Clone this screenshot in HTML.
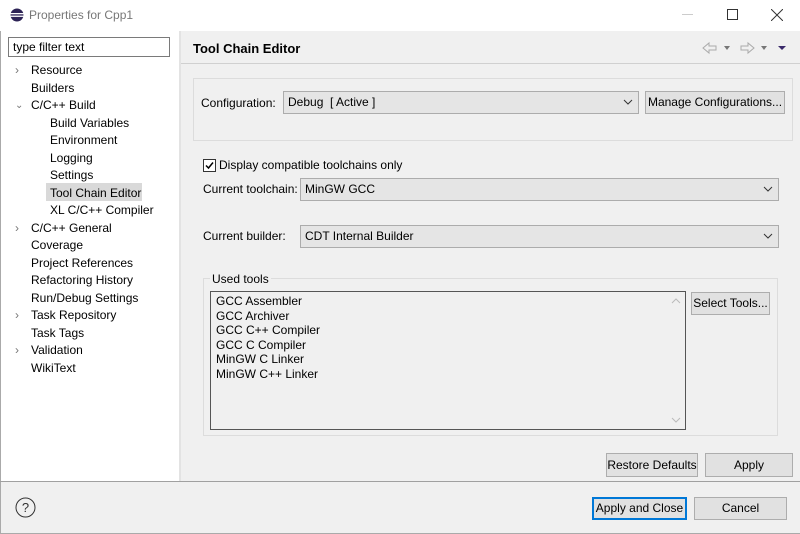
<!DOCTYPE html>
<html><head><style>
*{margin:0;padding:0;box-sizing:border-box}
body{width:800px;height:534px;position:relative;background:#f0f0f0;font-family:"Liberation Sans",sans-serif;font-size:12px;color:#000;overflow:hidden}
.a{position:absolute;white-space:nowrap}
.btn{position:absolute;background:#e1e1e1;border:1px solid #adadad;text-align:center;line-height:20px}
.combo{position:absolute;background:#e5e5e5;border:1px solid #acacac;padding-left:4px;line-height:20px}
.combo svg{position:absolute;right:5px;top:7px}
.grp{position:absolute;border:1px solid #dcdcdc}
.t{position:absolute;left:31px}
.t2{position:absolute;left:50px}
.arr{position:absolute;left:15px;color:#777}
</style></head><body>
<!-- title bar -->
<div class="a" style="left:0;top:0;width:800px;height:31px;background:#fff"></div>
<svg class="a" style="left:10px;top:8px" width="14" height="14" viewBox="0 0 14 14"><circle cx="7" cy="7" r="6.5" fill="#2c2255"/><rect x="0" y="5" width="14" height="1.3" fill="#fff"/><rect x="0" y="7.6" width="14" height="1.3" fill="#fff"/><circle cx="7" cy="7" r="6.5" fill="none" stroke="#f7941e" stroke-width="0" /></svg>
<div class="a" style="left:29px;top:8px;color:#777;font-size:12px">Properties for Cpp1</div>
<div class="a" style="left:682px;top:14px;width:11px;height:1px;background:#ccc"></div>
<div class="a" style="left:727px;top:9px;width:11px;height:11px;border:1px solid #333"></div>
<svg class="a" style="left:771px;top:9px" width="12" height="12"><path d="M0 0L12 12M12 0L0 12" stroke="#333" stroke-width="1"/></svg>
<!-- left panel -->
<div class="a" style="left:0;top:31px;width:179px;height:450px;background:#fff;border-left:1px solid #aaa"></div>
<div class="a" style="left:179px;top:31px;width:2px;height:450px;background:#e3e3e3"></div>
<div class="a" style="left:8px;top:37px;width:162px;height:20px;border:1px solid #7a7a7a;background:#fff;padding-left:4px;line-height:18px">type filter text</div>
<div class="a" style="left:46px;top:183px;width:96px;height:18px;background:#d9d9d9"></div>
<div class="a" style="left:0;top:62px;width:180px;line-height:17.5px">
<span class="arr" style="top:0">›</span><span class="t" style="top:0">Resource</span>
<span class="t" style="top:17.5px">Builders</span>
<span class="arr" style="top:35px;font-size:10px">⌄</span><span class="t" style="top:35px">C/C++ Build</span>
<span class="t2" style="top:52.5px">Build Variables</span>
<span class="t2" style="top:70px">Environment</span>
<span class="t2" style="top:87.5px">Logging</span>
<span class="t2" style="top:105px">Settings</span>
<span class="t2" style="top:122.5px">Tool Chain Editor</span>
<span class="t2" style="top:140px">XL C/C++ Compiler</span>
<span class="arr" style="top:157.5px">›</span><span class="t" style="top:157.5px">C/C++ General</span>
<span class="t" style="top:175px">Coverage</span>
<span class="t" style="top:192.5px">Project References</span>
<span class="t" style="top:210px">Refactoring History</span>
<span class="t" style="top:227.5px">Run/Debug Settings</span>
<span class="arr" style="top:245px">›</span><span class="t" style="top:245px">Task Repository</span>
<span class="t" style="top:262.5px">Task Tags</span>
<span class="arr" style="top:280px">›</span><span class="t" style="top:280px">Validation</span>
<span class="t" style="top:297.5px">WikiText</span>
</div>
<!-- header -->
<div class="a" style="left:181px;top:31px;width:619px;height:33px;border-bottom:1px solid #d0d0d0"></div>
<div class="a" style="left:193px;top:41px;font-weight:bold;font-size:13px">Tool Chain Editor</div>
<svg class="a" style="left:700px;top:40px" width="92" height="16"><path d="M3 8L9 3V6H16V10H9V13Z" fill="none" stroke="#aaa"/><path d="M24 6L30 6L27 10Z" fill="#777"/><path d="M54 8L48 3V6H41V10H48V13Z" fill="none" stroke="#aaa"/><path d="M61 6L67 6L64 10Z" fill="#777"/><path d="M78 6L86 6L82 10Z" fill="#3a2a6a"/></svg>
<!-- config group -->
<div class="grp" style="left:193px;top:78px;width:600px;height:63px"></div>
<div class="a" style="left:201px;top:96px">Configuration:</div>
<div class="combo" style="left:283px;top:91px;width:356px;height:23px">Debug&nbsp; [ Active ]<svg width="10" height="6"><path d="M1 1L5 5L9 1" fill="none" stroke="#333"/></svg></div>
<div class="btn" style="left:645px;top:91px;width:140px;height:23px">Manage Configurations...</div>
<!-- checkbox -->
<div class="a" style="left:203px;top:159px;width:13px;height:13px;border:1px solid #333;background:#fff"></div>
<svg class="a" style="left:204px;top:160px" width="11" height="11"><path d="M2 5.5L4.5 8L9 2.5" fill="none" stroke="#000" stroke-width="1.5"/></svg>
<div class="a" style="left:219px;top:158px">Display compatible toolchains only</div>
<div class="a" style="left:203px;top:182px">Current toolchain:</div>
<div class="combo" style="left:300px;top:178px;width:479px;height:23px">MinGW GCC<svg width="10" height="6"><path d="M1 1L5 5L9 1" fill="none" stroke="#333"/></svg></div>
<div class="a" style="left:203px;top:229px">Current builder:</div>
<div class="combo" style="left:300px;top:225px;width:479px;height:23px">CDT Internal Builder<svg width="10" height="6"><path d="M1 1L5 5L9 1" fill="none" stroke="#333"/></svg></div>
<!-- used tools -->
<div class="grp" style="left:203px;top:278px;width:575px;height:158px"></div>
<div class="a" style="left:210px;top:272px;background:#f0f0f0;padding:0 2px">Used tools</div>
<div class="a" style="left:210px;top:291px;width:476px;height:139px;border:1px solid #555;background:#f0f0f0;line-height:14.6px;padding:2px 0 0 5px">GCC Assembler<br>GCC Archiver<br>GCC C++ Compiler<br>GCC C Compiler<br>MinGW C Linker<br>MinGW C++ Linker</div>
<svg class="a" style="left:671px;top:298px" width="10" height="126"><path d="M1 5L5 1L9 5M1 120L5 124L9 120" fill="none" stroke="#bbb"/></svg>
<div class="btn" style="left:691px;top:292px;width:79px;height:23px">Select Tools...</div>
<div class="btn" style="left:606px;top:453px;width:92px;height:24px;line-height:22px">Restore Defaults</div>
<div class="btn" style="left:705px;top:453px;width:88px;height:24px;line-height:22px">Apply</div>
<!-- bottom -->
<div class="a" style="left:0;top:481px;width:800px;height:1px;background:#a0a0a0"></div>
<div class="a" style="left:0;top:482px;width:800px;height:52px;background:#f0f0f0;border-left:1px solid #aaa;border-bottom:1px solid #aaa"></div>
<svg class="a" style="left:15px;top:497px" width="21" height="21"><circle cx="10.5" cy="10.5" r="9.5" fill="none" stroke="#333"/><text x="10.5" y="15" font-family="Liberation Sans" font-size="13" text-anchor="middle" fill="#333">?</text></svg>
<div class="btn" style="left:592px;top:497px;width:95px;height:23px;border:2px solid #0078d7;line-height:19px">Apply and Close</div>
<div class="btn" style="left:694px;top:497px;width:93px;height:23px">Cancel</div>
</body></html>
